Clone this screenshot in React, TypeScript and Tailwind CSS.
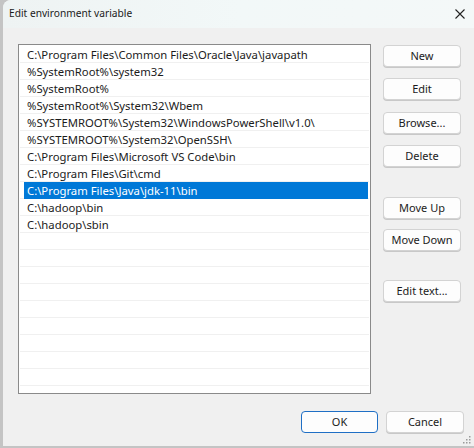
import React from "react";

const rows = [
  "C:\\Program Files\\Common Files\\Oracle\\Java\\javapath",
  "%SystemRoot%\\system32",
  "%SystemRoot%",
  "%SystemRoot%\\System32\\Wbem",
  "%SYSTEMROOT%\\System32\\WindowsPowerShell\\v1.0\\",
  "%SYSTEMROOT%\\System32\\OpenSSH\\",
  "C:\\Program Files\\Microsoft VS Code\\bin",
  "C:\\Program Files\\Git\\cmd",
  "C:\\Program Files\\Java\\jdk-11\\bin",
  "C:\\hadoop\\bin",
  "C:\\hadoop\\sbin",
];

const SELECTED = 8;

function Btn({ label, className = "" }: { label: string; className?: string }) {
  return (
    <div
      className={
        "w-[78px] h-[22px] flex items-center justify-center rounded-[4px] border border-[#d3d3d3] bg-[#fdfdfd] text-[11px] text-[#1b1b1b] shadow-[0_1px_0_#c8c8c8] " +
        className
      }
    >
      {label}
    </div>
  );
}

export default function App() {
  const all = [...rows, ...Array(12).fill("")];
  return (
    <div
      className="w-[474px] h-[448px] overflow-hidden bg-[#c4c4c4] relative"
      style={{ fontFamily: '"Noto Sans", "Open Sans", sans-serif' }}
    >
      <div className="ml-[3px] h-[446px] rounded-tl-[8px] bg-[#f0f0f0] flex flex-col relative">
        <div className="h-[28px] flex items-center justify-between pl-[6px] pr-[9px] rounded-tl-[8px] bg-gradient-to-r from-[#eef3f3] via-[#f2f8f8] to-[#f4f8f8]">
          <span className="text-[10.2px] text-[#1b1b1b]">Edit environment variable</span>
          <svg width="10" height="10" viewBox="0 0 10 10">
            <path d="M0.5 0.5 L9.5 9.5 M9.5 0.5 L0.5 9.5" stroke="#222" strokeWidth="1.1" />
          </svg>
        </div>
        <div className="flex pt-[16px] pl-[15px]">
          <div className="w-[353px] h-[350px] border border-[#8a8a8a] bg-white overflow-hidden pt-[1px] pl-[1px] pr-[1px]">
            {all.map((r, i) => (
              <div key={i} className="h-[17px] border-b border-[#f0f0f0] relative">
                {i === SELECTED && (
                  <div className="absolute left-[4px] right-[1px] top-0 bottom-[-1px] bg-[#0078d7]" />
                )}
                <span
                  className={
                    "absolute left-[7px] top-0 leading-[17px] text-[11.3px] whitespace-nowrap " +
                    (i === SELECTED ? "text-white" : "text-[#1b1b1b]")
                  }
                >
                  {r}
                </span>
              </div>
            ))}
          </div>
          <div className="ml-[12px] flex flex-col">
            <Btn label="New" className="mt-[1px]" />
            <Btn label="Edit" className="mt-[11px]" />
            <Btn label="Browse..." className="mt-[12px]" />
            <Btn label="Delete" className="mt-[11px]" />
            <Btn label="Move Up" className="mt-[30px]" />
            <Btn label="Move Down" className="mt-[10px]" />
            <Btn label="Edit text..." className="mt-[29px]" />
          </div>
        </div>
        <div className="flex justify-end gap-[8px] pr-[10px] mt-[17px]">
          <div className="w-[77px] h-[22px] flex items-center justify-center rounded-[4px] border border-[#1f6fc5] bg-[#fdfdfd] text-[11px] text-[#1b1b1b]">
            OK
          </div>
          <Btn label="Cancel" />
        </div>
        <svg width="8" height="8" viewBox="0 0 8 8" className="absolute right-[3px] bottom-[2px]">
          <rect x="6" y="0" width="1.5" height="1.5" fill="#9a9a9a" />
          <rect x="3" y="3" width="1.5" height="1.5" fill="#9a9a9a" />
          <rect x="6" y="3" width="1.5" height="1.5" fill="#9a9a9a" />
          <rect x="0" y="6" width="1.5" height="1.5" fill="#9a9a9a" />
          <rect x="3" y="6" width="1.5" height="1.5" fill="#9a9a9a" />
          <rect x="6" y="6" width="1.5" height="1.5" fill="#9a9a9a" />
        </svg>
      </div>
    </div>
  );
}
